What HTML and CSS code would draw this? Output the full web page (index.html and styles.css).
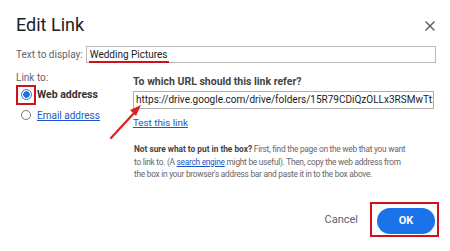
FILE: index.html
```html
<!DOCTYPE html>
<html>
<head>
<meta charset="utf-8">
<link rel="stylesheet" href="styles.css">
</head>
<body>
<div class="dialog">
  <div class="title-row">
    <h1 class="title">Edit Link</h1>
    <svg class="close" width="10" height="10" viewBox="0 0 10 10"><path d="M0.5 0.5L9.5 9.5M9.5 0.5L0.5 9.5" stroke="#5f6368" stroke-width="1.5" fill="none"/></svg>
  </div>
  <div class="display-row">
    <span class="label">Text to display:</span>
    <div class="text-input"><span class="marked">Wedding Pictures</span></div>
  </div>
  <div class="main">
    <div class="left">
      <div class="label link-to">Link to:</div>
      <div class="option">
        <span class="radio-box"><span class="radio checked"></span></span>
        <span class="opt-web">Web address</span>
      </div>
      <div class="option second">
        <span class="radio-pad"><span class="radio"></span></span>
        <span class="opt-email">Email address</span>
      </div>
    </div>
    <div class="right">
      <div class="question">To which URL should this link refer?</div>
      <div class="url-input"><span>https://drive.google.com/drive/folders/15R79CDiQzOLLx3RSMwTtxtYq</span></div>
      <a class="test-link">Test this link</a>
      <p class="help"><b>Not sure what to put in the box?</b> First, find the page on the web that you want to link to. (A <a class="inline-link">search engine</a> might be useful). Then, copy the web address from the box in your browser's address bar and paste it in to the box above.</p>
    </div>
    <svg class="arrow" width="40" height="40" viewBox="0 0 40 40"><path d="M3 36L27 10" stroke="#e0201c" stroke-width="2.2" fill="none" stroke-linecap="round"/><path d="M33 3L22 8L28 14Z" fill="#e0201c"/></svg>
  </div>
  <div class="buttons">
    <span class="cancel">Cancel</span>
    <span class="ok-box"><span class="ok">OK</span></span>
  </div>
</div>
</body>
</html>
```
FILE: styles.css
```css
* { box-sizing: border-box; }
html, body { margin: 0; padding: 0; background: #fff; }
body { width: 450px; height: 251px; overflow: hidden; font-family: Roboto, "Liberation Sans", Arial, sans-serif; color: #444; }
.dialog { padding: 14px 14px 0 16px; }
.title-row { display: flex; justify-content: space-between; align-items: center; height: 22px; }
.title { margin: 0; font-family: Roboto, sans-serif; font-weight: 400; font-size: 18px; color: #202124; line-height: 22px; }
.close { margin-right: 1px; margin-top: 2px; }
.display-row { display: flex; align-items: center; margin-top: 10px; gap: 3px; }
.label { font-size: 10px; color: #5f6368; }
.text-input { flex: 1; height: 17px; border: 1px solid #b8b8b8; padding: 0 2px; font-size: 10px; color: #222; line-height: 15px; }
.marked { display: inline-block; border-bottom: 2px solid #d0101a; line-height: 13px; padding: 0 1px; }
.main { position: relative; display: flex; margin-top: 9px; }
.left { width: 117px; flex: none; }
.link-to { line-height: 12px; }
.option { display: flex; align-items: center; height: 20px; }
.option.second { margin-top: 1px; }
.radio-box { width: 20px; height: 20px; border: 2px solid #d0101a; display: flex; align-items: center; justify-content: center; margin-top: 1px; }
.radio-pad { width: 20px; height: 20px; display: flex; align-items: center; justify-content: center; }
.radio { width: 10px; height: 10px; border-radius: 50%; border: 1px solid #777; background: #fff; }
.radio.checked { border: 1px solid #1a73e8; background: radial-gradient(circle, #1a73e8 0 3px, #fff 3.5px); width: 11px; height: 11px; }
.opt-web { font-weight: 700; color: #333; margin-left: 1px; font-size: 10.5px; }
.opt-email { color: #1a56c4; text-decoration: underline; margin-left: 1px; font-size: 10px; }
.right { flex: 1; min-width: 0; padding-right: 2px; }
.question { font-size: 10.5px; font-weight: 700; color: #444; line-height: 12px; margin-top: 4px; }
.url-input { margin-top: 3px; height: 18px; border: 1px solid #b0b0b0; padding: 0 2px; font-size: 10px; line-height: 16px; color: #222; overflow: hidden; white-space: nowrap; }
.test-link { display: block; margin-top: 8px; font-size: 9.8px; color: #1a56c4; text-decoration: underline; line-height: 12px; }
.help { margin: 14px 0 0 1px; max-width: 276px; font-size: 8.3px; letter-spacing: -0.25px; line-height: 12.5px; color: #666; }
.help b { color: #444; letter-spacing: 0; }
.inline-link { color: #1a56c4; text-decoration: underline; }
.arrow { position: absolute; left: 92px; top: 30px; }
.buttons { display: flex; justify-content: flex-end; align-items: center; gap: 12px; margin-top: 21px; margin-right: -3px; }
.cancel { font-size: 11px; color: #5f6368; }
.ok-box { border: 2px solid #d0101a; padding: 4px 2px 1px 5px; display: flex; }
.ok { width: 58px; height: 26px; border-radius: 13px; background: #1a73e8; color: #fff; font-size: 11px; font-weight: 700; display: flex; align-items: center; justify-content: center; }
```
